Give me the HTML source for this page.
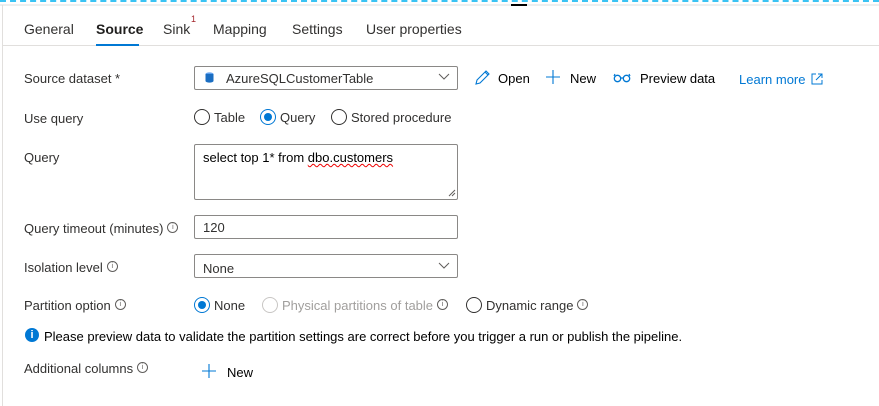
<!DOCTYPE html>
<html><head><style>
body{margin:0;width:879px;height:406px;background:#fff;font-family:"Liberation Sans",sans-serif;font-size:13px;color:#323130;position:relative;overflow:hidden}
.a{position:absolute;white-space:nowrap}
.box{position:absolute;border:1px solid #8a8886;border-radius:2px;box-sizing:border-box;background:#fff}
.rad{position:absolute;width:16px;height:16px;border:1px solid #323130;border-radius:50%;box-sizing:border-box}
.rad.on{border-color:#0078d4}
.rad.on::after{content:"";position:absolute;left:3px;top:3px;width:8px;height:8px;border-radius:50%;background:#0078d4}
.i{display:inline-block;width:9px;height:9px;border:1px solid #605e5c;border-radius:50%;font-size:7px;line-height:9px;text-align:center;color:#605e5c;vertical-align:middle;margin-left:4px;position:relative;top:-2px}
.tab{position:absolute;top:21px;font-size:14px}
</style></head><body>
<div class="a" style="left:0;top:0;width:879px;height:0;border-top:2px dashed #3bc3f3"></div>
<div class="a" style="left:0;top:4px;width:879px;height:2px;background:#eeeeee"></div>
<div class="a" style="left:511px;top:4px;width:16px;height:2px;background:#000"></div>
<div class="a" style="left:2px;top:5px;width:1px;height:401px;background:#e1dfdd"></div>
<div class="a" style="left:3px;top:45px;width:876px;height:1px;background:#e1dfdd"></div>
<div class="tab" style="left:24px">General</div>
<div class="tab" style="left:96px;font-weight:600;color:#201f1e">Source</div>
<div class="a" style="left:96px;top:44px;width:43px;height:2px;background:#0078d4"></div>
<div class="tab" style="left:163px">Sink</div>
<div class="a" style="left:191px;top:14px;font-size:9px;color:#a4262c">1</div>
<div class="tab" style="left:213px">Mapping</div>
<div class="tab" style="left:292px">Settings</div>
<div class="tab" style="left:366px">User properties</div>

<div class="a" style="left:24px;top:71px">Source dataset *</div>
<div class="box" style="left:194px;top:66px;width:264px;height:24px"></div>
<svg class="a" style="left:205px;top:72px" width="9" height="11"><ellipse cx="4.5" cy="2" rx="4" ry="1.6" fill="#5ea0ef"/><rect x=".5" y="2" width="8" height="7" fill="#1b6ec2"/><ellipse cx="4.5" cy="9" rx="4" ry="1.6" fill="#1b6ec2"/></svg>
<div class="a" style="left:226px;top:71px">AzureSQLCustomerTable</div>
<svg class="a" style="left:438px;top:73px" width="12" height="8"><path d="M1 1l5 5 5-5" fill="none" stroke="#605e5c"/></svg>
<svg class="a" style="left:474px;top:69px" width="17" height="17"><path d="M2 15l1-4 9-9 3 3-9 9z M11 3l3 3" fill="none" stroke="#0078d4" stroke-width="1.1"/></svg>
<div class="a" style="left:498px;top:71px;color:#000">Open</div>
<svg class="a" style="left:545px;top:69px" width="16" height="16"><path d="M8 1v14M1 8h14" stroke="#0078d4" stroke-width="1.1"/></svg>
<div class="a" style="left:570px;top:71px;color:#000">New</div>
<svg class="a" style="left:613px;top:73px" width="18" height="10"><circle cx="4.5" cy="5.5" r="3.2" fill="none" stroke="#0078d4" stroke-width="1.3"/><circle cx="13.5" cy="5.5" r="3.2" fill="none" stroke="#0078d4" stroke-width="1.3"/><path d="M7.7 5h2.6M1 3l1-2M17 3l-1-2" stroke="#0078d4" stroke-width="1.2" fill="none"/></svg>
<div class="a" style="left:640px;top:71px;color:#000">Preview data</div>
<div class="a" style="left:739px;top:72px;color:#0078d4">Learn more <svg width="12" height="12" style="vertical-align:-1px;margin-left:2px"><path d="M5 1H1v10h10V7M7 1h4v4M11 1L5 7" fill="none" stroke="#0078d4"/></svg></div>

<div class="a" style="left:24px;top:111px">Use query</div>
<div class="rad" style="left:194px;top:109px"></div><div class="a" style="left:214px;top:110px">Table</div>
<div class="rad on" style="left:260px;top:109px"></div><div class="a" style="left:280px;top:110px">Query</div>
<div class="rad" style="left:331px;top:109px"></div><div class="a" style="left:351px;top:110px">Stored procedure</div>

<div class="a" style="left:24px;top:150px">Query</div>
<div class="box" style="left:194px;top:144px;width:264px;height:56px"></div>
<div class="a" style="left:203px;top:150px;color:#000">select top 1* from <span style="text-decoration:underline wavy #e00;text-decoration-thickness:1px">dbo.customers</span></div>
<svg class="a" style="left:447px;top:188px" width="9" height="9"><path d="M8 2L2 8M8 5L5 8" stroke="#605e5c"/></svg>

<div class="a" style="left:24px;top:221px">Query timeout (minutes)<span class="i">i</span></div>
<div class="box" style="left:194px;top:215px;width:264px;height:24px"></div>
<div class="a" style="left:203px;top:220px">120</div>

<div class="a" style="left:24px;top:260px">Isolation level<span class="i">i</span></div>
<div class="box" style="left:194px;top:254px;width:264px;height:24px"></div>
<div class="a" style="left:203px;top:261px">None</div>
<svg class="a" style="left:438px;top:262px" width="12" height="8"><path d="M1 1l5 5 5-5" fill="none" stroke="#605e5c"/></svg>

<div class="a" style="left:24px;top:298px">Partition option<span class="i">i</span></div>
<div class="rad on" style="left:194px;top:297px"></div><div class="a" style="left:214px;top:298px">None</div>
<div class="rad" style="left:262px;top:297px;border-color:#c8c6c4"></div><div class="a" style="left:282px;top:298px;color:#a19f9d">Physical partitions of table<span class="i">i</span></div>
<div class="rad" style="left:466px;top:297px"></div><div class="a" style="left:486px;top:298px">Dynamic range<span class="i">i</span></div>

<div class="a" style="left:25px;top:328px;width:14px;height:14px;border-radius:50%;background:#0078d4;color:#fff;font-weight:bold;font-size:11px;line-height:14px;text-align:center">i</div>
<div class="a" style="left:44px;top:329px;color:#000">Please preview data to validate the partition settings are correct before you trigger a run or publish the pipeline.</div>

<div class="a" style="left:24px;top:361px">Additional columns<span class="i">i</span></div>
<svg class="a" style="left:202px;top:364px" width="14" height="14"><path d="M7 0v14M0 7h14" stroke="#0078d4" stroke-width="1.1"/></svg>
<div class="a" style="left:227px;top:365px;color:#000">New</div>
</body></html>
